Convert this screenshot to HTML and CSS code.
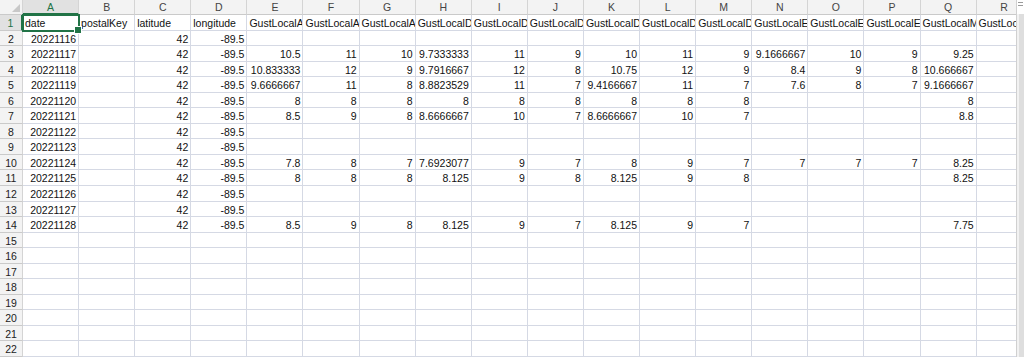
FILE: index.html
```html
<!DOCTYPE html>
<html lang="en">
<head>
  <meta charset="UTF-8">
  <meta name="viewport" content="width=device-width, initial-scale=1.0">
  <title>weather.csv</title>
  <link rel="stylesheet" href="styles.css">
</head>
<body>
  <div class="window">
    <div class="sheet" id="sheet"></div>
    <div class="vscroll">
      <div class="split"></div>
      <div class="track"></div>
    </div>
  </div>
  <script>
    // column letters A..R
    var letters = 'ABCDEFGHIJKLMNOPQR'.split('');

    // first row: the csv header (as far as the columns show it)
    var names = ['date', 'postalKey', 'latitude', 'longitude',
      'GustLocalA', 'GustLocalA', 'GustLocalA',
      'GustLocalD', 'GustLocalD', 'GustLocalD',
      'GustLocalD', 'GustLocalD', 'GustLocalD',
      'GustLocalE', 'GustLocalE', 'GustLocalE',
      'GustLocalM', 'GustLoc'];

    // data rows, A..Q ('' = empty)
    var rows = [
      ['20221116', '', '42', '-89.5'],
      ['20221117', '', '42', '-89.5', '10.5', '11', '10', '9.7333333', '11', '9', '10', '11', '9', '9.1666667', '10', '9', '9.25'],
      ['20221118', '', '42', '-89.5', '10.833333', '12', '9', '9.7916667', '12', '8', '10.75', '12', '9', '8.4', '9', '8', '10.666667'],
      ['20221119', '', '42', '-89.5', '9.6666667', '11', '8', '8.8823529', '11', '7', '9.4166667', '11', '7', '7.6', '8', '7', '9.1666667'],
      ['20221120', '', '42', '-89.5', '8', '8', '8', '8', '8', '8', '8', '8', '8', '', '', '', '8'],
      ['20221121', '', '42', '-89.5', '8.5', '9', '8', '8.6666667', '10', '7', '8.6666667', '10', '7', '', '', '', '8.8'],
      ['20221122', '', '42', '-89.5'],
      ['20221123', '', '42', '-89.5'],
      ['20221124', '', '42', '-89.5', '7.8', '8', '7', '7.6923077', '9', '7', '8', '9', '7', '7', '7', '7', '8.25'],
      ['20221125', '', '42', '-89.5', '8', '8', '8', '8.125', '9', '8', '8.125', '9', '8', '', '', '', '8.25'],
      ['20221126', '', '42', '-89.5'],
      ['20221127', '', '42', '-89.5'],
      ['20221128', '', '42', '-89.5', '8.5', '9', '8', '8.125', '9', '7', '8.125', '9', '7', '', '', '', '7.75']
    ];

    var sheet = document.getElementById('sheet');

    function addCell(cls, text){
      var div = document.createElement('div');
      div.className = cls;
      div.textContent = text;
      sheet.appendChild(div);
    }

    // column headers
    addCell('cell head corner', '');
    for( var c = 0; c < letters.length; c++ ){
      addCell(c == 0 ? 'cell head colhead sel' : 'cell head colhead', letters[c]);
    }

    // 22 visible rows
    for( var r = 1; r <= 22; r++ ){
      addCell(r == 1 ? 'cell head rowhead sel' : 'cell head rowhead', r);
      for( var c = 0; c < letters.length; c++ ){
        if( r == 1 ){
          addCell(c == 0 ? 'cell text active' : 'cell text', names[c]);
        }else{
          var data = rows[r - 2] || [];
          addCell('cell num', data[c] || '');
        }
      }
    }
  </script>
</body>
</html>
```

FILE: styles.css
```css
* { margin: 0; padding: 0; box-sizing: border-box; }
body { font-family: "Liberation Sans", Arial, sans-serif; font-size: 10.5px; color: #111; background: #fff; overflow: hidden; }
.window { display: flex; height: 357px; }
.sheet { flex: 1; overflow: hidden; display: grid; grid-template-columns: 23px repeat(18, 56.1px); grid-template-rows: 15px; grid-auto-rows: 15.55px; align-content: start; }
.cell { border-right: 1px solid #d5d9e4; border-bottom: 1px solid #d5d9e4; padding: 1px 2px 0; white-space: nowrap; overflow: hidden; line-height: 14px; }
.text { text-align: left; }
.num { text-align: right; }
.head { background: #f3f3f3; color: #444; text-align: center; border-right-color: #d4d4d4; border-bottom-color: #cacaca; padding: 0; line-height: 15px; }
.rowhead { color: #222; padding-top: 1px; line-height: 14px; }
.head.sel { background: #e1e1e1; color: #217346; }
.colhead.sel { border-bottom: 2px solid #217346; }
.rowhead.sel { border-right: 2px solid #217346; }
.corner { position: relative; }
.corner:after { content: ""; position: absolute; right: 2px; bottom: 2px; border-left: 8px solid transparent; border-bottom: 8px solid #c8c8c8; }
.active { position: relative; z-index: 2; overflow: visible; outline: 2px solid #217346; outline-offset: -1px; }
.active:after { content: ""; position: absolute; right: -4px; bottom: -4px; width: 6px; height: 6px; background: #217346; border: 1px solid #fff; }
.vscroll { width: 8px; border-left: 1px solid #d0d0d0; display: flex; flex-direction: column; background: #fff; }
.split { margin: 2px 1px 0; border-top: 1px solid #9a9a9a; border-bottom: 1px solid #9a9a9a; height: 4px; }
.track { flex: 1; margin-top: 8px; background: #dedede; border-left: 2px solid #f2f2f2; }
```
